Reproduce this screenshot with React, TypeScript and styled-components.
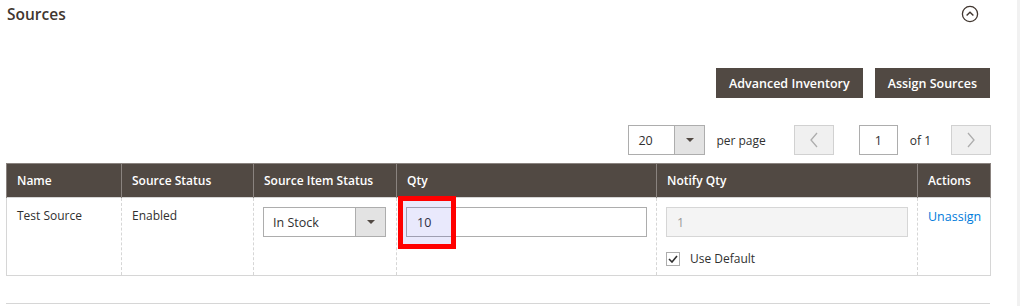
import React from "react";
import styled, { createGlobalStyle } from "styled-components";

const Global = createGlobalStyle`
  html, body { margin: 0; padding: 0; background: #fff; }
  body { font-family: "Open Sans", "Liberation Sans", sans-serif; color: #303030; font-size: 12px; }
  * { box-sizing: border-box; }
`;

const Page = styled.div`
  display: flex;
  width: 1020px;
  height: 306px;
  overflow: hidden;
`;

const Main = styled.div`
  width: 1017px;
  padding: 0 27px 0 6px;
`;

const SideStrip = styled.div`
  width: 3px;
  background: #f1f1f1;
`;

const TitleRow = styled.div`
  display: flex;
  align-items: center;
  justify-content: space-between;
  height: 28px;
  padding: 0 11px 0 1px;
`;

const Title = styled.h2`
  margin: 0;
  font-size: 15.5px;
  font-weight: 600;
  color: #41362f;
  line-height: 26px;
`;

const ActionsBar = styled.div`
  display: flex;
  justify-content: flex-end;
  gap: 12px;
  margin-top: 40px;
`;

const DarkButton = styled.button`
  height: 30px;
  padding: 0 13px;
  background: #514943;
  border: 0;
  color: #fff;
  font-family: inherit;
  font-size: 12.5px;
  font-weight: 600;
`;

const PagerRow = styled.div`
  display: flex;
  justify-content: flex-end;
  align-items: center;
  height: 30px;
  margin-top: 27px;
  margin-right: -1px;
`;

const PerPageSelect = styled.div`
  display: flex;
  width: 77px;
  height: 30px;
  border: 1px solid #adadad;
`;

const SelectValue = styled.div`
  flex: 1;
  display: flex;
  align-items: center;
  padding-left: 9px;
  font-size: 12.5px;
  color: #303030;
`;

const SelectArrow = styled.div`
  width: 30px;
  background: #e3e3e3;
  border-left: 1px solid #adadad;
  display: flex;
  align-items: center;
  justify-content: center;
  &::after {
    content: "";
    border-left: 4px solid transparent;
    border-right: 4px solid transparent;
    border-top: 4px solid #514943;
  }
`;

const PagerText = styled.span<{ $ml: number }>`
  margin-left: ${(p) => p.$ml}px;
  font-size: 12px;
  color: #303030;
`;

const NavButton = styled.div<{ $ml: number }>`
  margin-left: ${(p) => p.$ml}px;
  width: 40px;
  height: 30px;
  background: #f0f0f0;
  border: 1px solid #d1d1d1;
  display: flex;
  align-items: center;
  justify-content: center;
`;

const PageInput = styled.div`
  margin-left: 25px;
  width: 39px;
  height: 30px;
  border: 1px solid #adadad;
  display: flex;
  align-items: center;
  justify-content: center;
  font-size: 12.5px;
`;

const Table = styled.table`
  margin-top: 8px;
  width: 984px;
  border-collapse: collapse;
  table-layout: fixed;
`;

const Th = styled.th`
  background: #514943;
  color: #fff;
  font-size: 12px;
  font-weight: 600;
  text-align: left;
  height: 34px;
  padding: 0 10px;
  border: 1px solid #8a837f;
  border-bottom: 0;
  white-space: nowrap;
`;

const Td = styled.td`
  vertical-align: top;
  height: 78px;
  padding: 9px 9px 0 9px;
  border: 1px solid #d6d6d6;
  border-left-style: dashed;
  border-right-style: dashed;
  font-size: 12px;
  color: #303030;
  &:first-child { border-left-style: solid; }
  &:last-child { border-right-style: solid; }
`;

const CellText = styled.div`
  line-height: 18px;
  padding: 0 1px;
`;

const SelectBox = styled.div`
  display: flex;
  width: 123px;
  height: 30px;
  border: 1px solid #adadad;
`;

const TextInput = styled.div<{ $disabled?: boolean }>`
  height: 30px;
  border: 1px solid ${(p) => (p.$disabled ? "#d6d6d6" : "#adadad")};
  background: ${(p) => (p.$disabled ? "#f4f4f4" : "#fff")};
  color: ${(p) => (p.$disabled ? "#999" : "#303030")};
  display: flex;
  align-items: center;
  padding-left: 10px;
  font-size: 12.5px;
`;

const QtyWrap = styled.div`
  position: relative;
`;

const Highlight = styled.div`
  position: absolute;
  left: -8px;
  top: -11px;
  width: 58px;
  height: 53px;
  border: 5px solid #ff0000;
  background: rgba(40, 40, 230, 0.1);
`;

const CheckRow = styled.div`
  display: flex;
  align-items: center;
  gap: 10px;
  margin-top: 13px;
`;

const CheckBox = styled.div`
  width: 14px;
  height: 14px;
  border: 1px solid #adadad;
  display: flex;
  align-items: center;
  justify-content: center;
  background: #fff;
`;

const Link = styled.a`
  color: #007bdb;
  text-decoration: none;
  line-height: 18px;
  display: block;
  margin-top: 1px;
  padding-left: 1px;
  font-size: 12.5px;
`;

const BottomLine = styled.div`
  margin-top: 27px;
  width: 984px;
  border-top: 1px solid #d6d6d6;
`;

const Chevron = ({ dir }: { dir: "left" | "right" }) => (
  <svg width="10" height="16" viewBox="0 0 10 16">
    <path
      d={dir === "left" ? "M8 1 L2 8 L8 15" : "M2 1 L8 8 L2 15"}
      fill="none"
      stroke="#adadad"
      strokeWidth="1.3"
    />
  </svg>
);

export default function App() {
  return (
    <>
      <Global />
      <Page>
        <Main>
          <TitleRow>
            <Title>Sources</Title>
            <svg width="18" height="18" viewBox="0 0 18 18">
              <circle cx="9" cy="9" r="7.6" fill="none" stroke="#41362f" strokeWidth="1.3" />
              <path d="M5.6 10.6 L9 7.2 L12.4 10.6" fill="none" stroke="#41362f" strokeWidth="1.4" />
            </svg>
          </TitleRow>
          <ActionsBar>
            <DarkButton>Advanced Inventory</DarkButton>
            <DarkButton>Assign Sources</DarkButton>
          </ActionsBar>
          <PagerRow>
            <PerPageSelect>
              <SelectValue>20</SelectValue>
              <SelectArrow />
            </PerPageSelect>
            <PagerText $ml={11}>per page</PagerText>
            <NavButton $ml={28}>
              <Chevron dir="left" />
            </NavButton>
            <PageInput>1</PageInput>
            <PagerText $ml={12}>of 1</PagerText>
            <NavButton $ml={20}>
              <Chevron dir="right" />
            </NavButton>
          </PagerRow>
          <Table>
            <colgroup>
              <col style={{ width: 115 }} />
              <col style={{ width: 132 }} />
              <col style={{ width: 143 }} />
              <col style={{ width: 260 }} />
              <col style={{ width: 261 }} />
              <col style={{ width: 73 }} />
            </colgroup>
            <thead>
              <tr>
                <Th>Name</Th>
                <Th>Source Status</Th>
                <Th>Source Item Status</Th>
                <Th>Qty</Th>
                <Th>Notify Qty</Th>
                <Th>Actions</Th>
              </tr>
            </thead>
            <tbody>
              <tr>
                <Td>
                  <CellText>Test Source</CellText>
                </Td>
                <Td>
                  <CellText>Enabled</CellText>
                </Td>
                <Td>
                  <SelectBox>
                    <SelectValue>In Stock</SelectValue>
                    <SelectArrow />
                  </SelectBox>
                </Td>
                <Td>
                  <QtyWrap>
                    <TextInput>10</TextInput>
                    <Highlight />
                  </QtyWrap>
                </Td>
                <Td>
                  <TextInput $disabled>1</TextInput>
                  <CheckRow>
                    <CheckBox>
                      <svg width="10" height="8" viewBox="0 0 10 8">
                        <path d="M1 4 L4 7 L9 1" fill="none" stroke="#303030" strokeWidth="1.6" />
                      </svg>
                    </CheckBox>
                    <span>Use Default</span>
                  </CheckRow>
                </Td>
                <Td>
                  <Link href="#">Unassign</Link>
                </Td>
              </tr>
            </tbody>
          </Table>
          <BottomLine />
        </Main>
        <SideStrip />
      </Page>
    </>
  );
}
